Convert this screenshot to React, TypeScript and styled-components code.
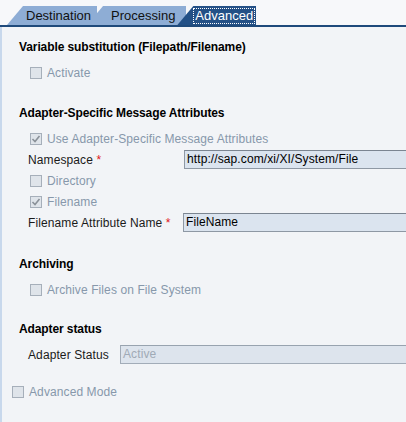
import styled, { createGlobalStyle } from 'styled-components';

const GlobalStyle = createGlobalStyle`
    html, body {
        margin: 0;
        padding: 0;
        height: 100%;
        overflow: hidden;
        background: #f7f8fa;
        font-family: "Liberation Sans", Arial, sans-serif;
        font-size: 12px;
    }
    #root {
        height: 100%;
    }
`;

const Page = styled.div`
    display: flex;
    flex-direction: column;
    height: 100%;
`;

const TabStrip = styled.div`
    display: flex;
    align-items: flex-end;
    padding: 6px 0 0 7px;
    border-bottom: 2px solid #1f4a7b;
`;

const Tab = styled.div<{ $active?: boolean; $z: number; $overlap: number; $padLeft: number; $padRight: number }>`
    position: relative;
    z-index: ${p => p.$z};
    height: 19px;
    line-height: 19px;
    font-size: 13px;
    margin-left: ${p => -p.$overlap}px;
    padding: 0 ${p => p.$padRight}px 0 ${p => p.$padLeft}px;
    background: ${p => (p.$active ? '#235086' : '#8eadd5')};
    color: ${p => (p.$active ? '#ffffff' : '#111111')};
    clip-path: polygon(16px 0, 100% 0, 100% 100%, 0 100%);
    white-space: nowrap;
`;

const FocusText = styled.span`
    display: inline-block;
    line-height: 14px;
    padding: 0 1px;
    border: 1px dotted #ffffff;
`;

const Content = styled.div`
    flex: 1;
    background: #f2f4f7;
    border-left: 2px solid #c8d8ec;
    padding: 10px 0 0 17px;
    letter-spacing: 0.1px;
`;

const Section = styled.div<{ $gap?: number }>`
    display: flex;
    flex-direction: column;
    margin-top: ${p => p.$gap ?? 20}px;
`;

const SectionTitle = styled.div`
    height: 20px;
    line-height: 20px;
    font-weight: bold;
    letter-spacing: -0.1px;
    color: #000000;
    margin-bottom: 5px;
`;

const Row = styled.div<{ $indent?: number }>`
    display: flex;
    align-items: center;
    height: 21px;
    margin-left: ${p => p.$indent ?? 9}px;
`;

const Box = styled.span<{ $gap: number }>`
    box-sizing: border-box;
    width: 12px;
    height: 12px;
    margin: 0 ${p => p.$gap}px 0 2px;
    border: 1px solid #a6afba;
    background: #dfe4ea;
    display: inline-flex;
    align-items: center;
    justify-content: center;
`;

const CheckText = styled.span`
    color: #8798ab;
`;

const Label = styled.span<{ $width: number }>`
    width: ${p => p.$width}px;
    flex-shrink: 0;
    color: #1a1a1a;
`;

const Required = styled.span`
    color: #e0161b;
`;

const Field = styled.div<{ $disabled?: boolean }>`
    box-sizing: border-box;
    flex: 1;
    min-width: 0;
    height: 19px;
    line-height: 17px;
    padding-left: 2px;
    border: 1px solid ${p => (p.$disabled ? '#a2acb8' : '#8e98a4')};
    border-top-color: ${p => (p.$disabled ? '#98a3af' : '#7b8591')};
    border-right: none;
    background: ${p => (p.$disabled ? '#dde4ed' : '#dbe4ef')};
    color: ${p => (p.$disabled ? '#a0aab6' : '#000000')};
    white-space: nowrap;
    overflow: hidden;
`;

const Tick = () => (
    <svg width="10" height="10" viewBox="0 0 10 10">
        <path d="M1.5 5 L4 7.5 L8.5 2" fill="none" stroke="#8a9199" strokeWidth="1.6" />
    </svg>
);

const Check = ({ label, checked, gap = 5, indent }: { label: string; checked?: boolean; gap?: number; indent?: number }) => (
    <Row $indent={indent}>
        <Box $gap={gap}>{checked && <Tick />}</Box>
        <CheckText>{label}</CheckText>
    </Row>
);

const App = () => (
    <Page>
        <GlobalStyle />
        <TabStrip>
            <Tab $z={2} $overlap={0} $padLeft={19} $padRight={6}>Destination</Tab>
            <Tab $z={1} $overlap={10} $padLeft={24} $padRight={11}>Processing</Tab>
            <Tab $active $z={3} $overlap={9} $padLeft={16} $padRight={1}>
                <FocusText>Advanced</FocusText>
            </Tab>
        </TabStrip>
        <Content>
            <Section $gap={0}>
                <SectionTitle>Variable substitution (Filepath/Filename)</SectionTitle>
                <Check label="Activate" />
            </Section>
            <Section>
                <SectionTitle>Adapter-Specific Message Attributes</SectionTitle>
                <Check label="Use Adapter-Specific Message Attributes" checked />
                <Row>
                    <Label $width={156}>
                        Namespace <Required>*</Required>
                    </Label>
                    <Field>http://sap.com/xi/XI/System/File</Field>
                </Row>
                <Check label="Directory" />
                <Check label="Filename" checked />
                <Row>
                    <Label $width={155}>
                        Filename Attribute Name <Required>*</Required>
                    </Label>
                    <Field>FileName</Field>
                </Row>
            </Section>
            <Section $gap={21}>
                <SectionTitle>Archiving</SectionTitle>
                <Check label="Archive Files on File System" />
            </Section>
            <Section $gap={19}>
                <SectionTitle>Adapter status</SectionTitle>
                <Row>
                    <Label $width={92}>Adapter Status</Label>
                    <Field $disabled>Active</Field>
                </Row>
            </Section>
            <Section $gap={16}>
                <Check label="Advanced Mode" gap={5} indent={-9} />
            </Section>
        </Content>
    </Page>
);

export default App;
